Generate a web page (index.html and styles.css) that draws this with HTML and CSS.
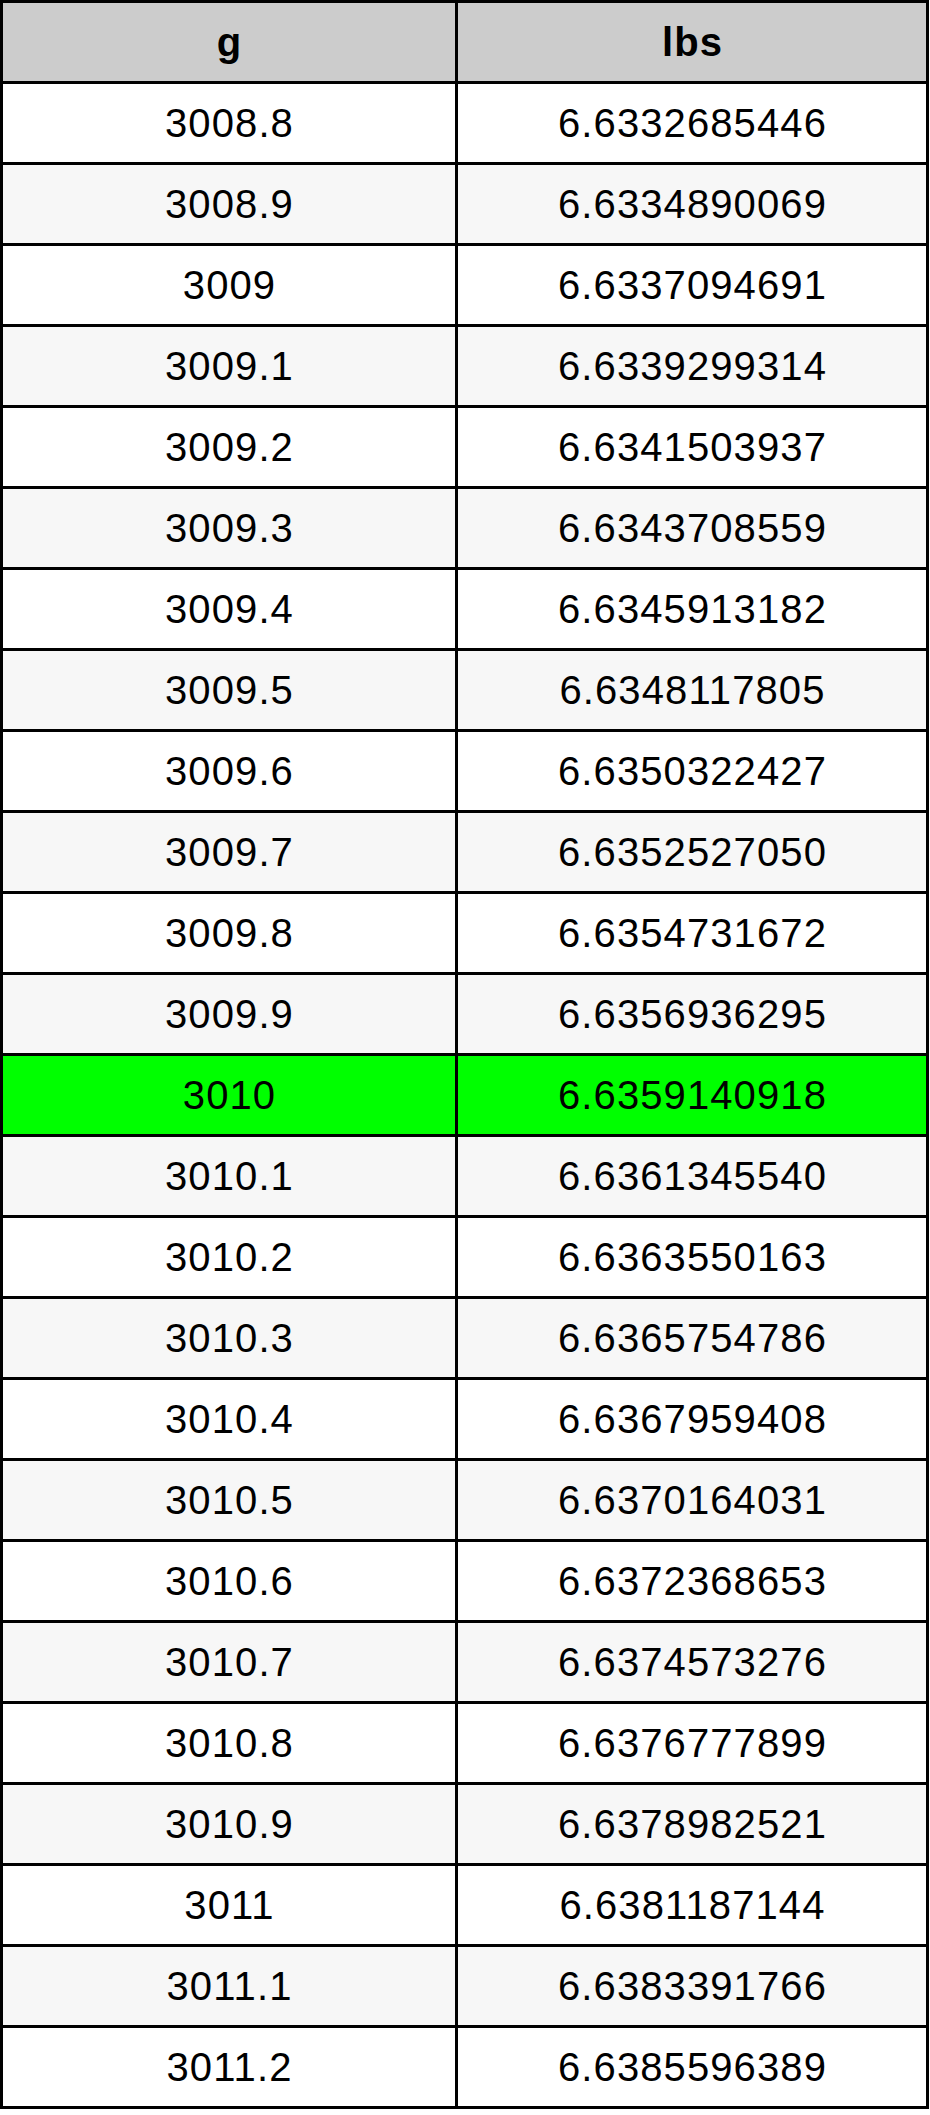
FILE: index.html
```html
<!DOCTYPE html>
<html>
<head>
<meta charset="utf-8">
<link rel="stylesheet" href="styles.css">
</head>
<body>
<table class="conv">
<colgroup><col class="c1"><col class="c2"></colgroup>
<thead>
<tr><th>g</th><th>lbs</th></tr>
</thead>
<tbody>
<tr><td>3008.8</td><td>6.6332685446</td></tr>
<tr><td>3008.9</td><td>6.6334890069</td></tr>
<tr><td>3009</td><td>6.6337094691</td></tr>
<tr><td>3009.1</td><td>6.6339299314</td></tr>
<tr><td>3009.2</td><td>6.6341503937</td></tr>
<tr><td>3009.3</td><td>6.6343708559</td></tr>
<tr><td>3009.4</td><td>6.6345913182</td></tr>
<tr><td>3009.5</td><td>6.6348117805</td></tr>
<tr><td>3009.6</td><td>6.6350322427</td></tr>
<tr><td>3009.7</td><td>6.6352527050</td></tr>
<tr><td>3009.8</td><td>6.6354731672</td></tr>
<tr><td>3009.9</td><td>6.6356936295</td></tr>
<tr class="hl"><td>3010</td><td>6.6359140918</td></tr>
<tr><td>3010.1</td><td>6.6361345540</td></tr>
<tr><td>3010.2</td><td>6.6363550163</td></tr>
<tr><td>3010.3</td><td>6.6365754786</td></tr>
<tr><td>3010.4</td><td>6.6367959408</td></tr>
<tr><td>3010.5</td><td>6.6370164031</td></tr>
<tr><td>3010.6</td><td>6.6372368653</td></tr>
<tr><td>3010.7</td><td>6.6374573276</td></tr>
<tr><td>3010.8</td><td>6.6376777899</td></tr>
<tr><td>3010.9</td><td>6.6378982521</td></tr>
<tr><td>3011</td><td>6.6381187144</td></tr>
<tr><td>3011.1</td><td>6.6383391766</td></tr>
<tr><td>3011.2</td><td>6.6385596389</td></tr>
</tbody>
</table>
</body>
</html>
```

FILE: styles.css
```css
html, body {
  margin: 0;
  padding: 0;
  background: #ffffff;
}

.conv {
  border-collapse: separate;
  border-spacing: 0;
  table-layout: fixed;
  width: 929px;
  border-top: 3px solid #000;
  border-left: 3px solid #000;
  font-family: "Liberation Sans", Arial, sans-serif;
  font-size: 40px;
  letter-spacing: 1.1px;
  color: #000;
}

.conv .c1 { width: 455px; }
.conv .c2 { width: 471px; }

.conv th,
.conv td {
  box-sizing: content-box;
  height: 78px;
  padding: 0 0 0 1px;
  border-right: 3px solid #000;
  border-bottom: 3px solid #000;
  text-align: center;
  vertical-align: middle;
  line-height: 1;
}

.conv th {
  background: #cccccc;
  font-weight: bold;
}

.conv tbody tr:nth-child(odd) td { background: #ffffff; }
.conv tbody tr:nth-child(even) td { background: #f7f7f7; }
.conv tbody tr.hl td { background: #00ff00; }
```
